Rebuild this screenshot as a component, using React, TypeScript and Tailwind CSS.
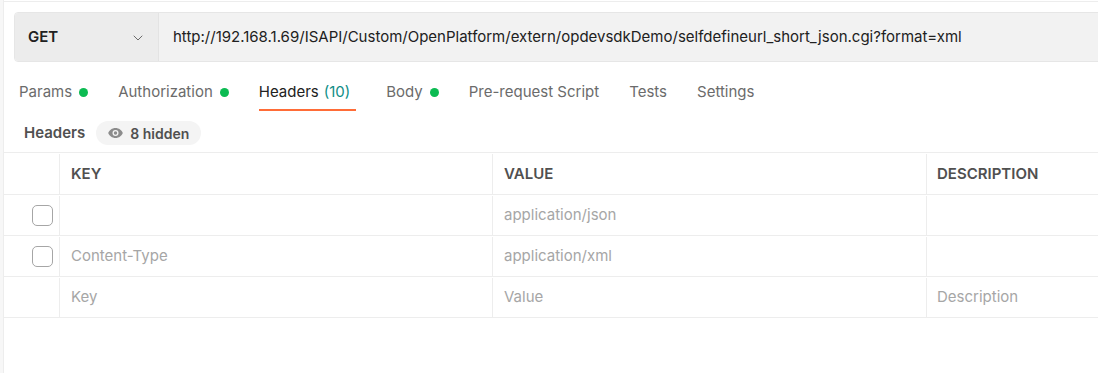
import React from 'react';
import { ChevronDown } from 'lucide-react';

const Dot = () => <span className="ml-[7px] inline-block h-[9px] w-[9px] rounded-full bg-[#0cbb52]" />;

interface TabProps {
    label: string;
    dot?: boolean;
    count?: string;
    active?: boolean;
}

const Tab: React.FC<TabProps> = ({ label, dot, count, active }) => {
    return (
        <div
            className={
                'flex items-center pt-[10px] pb-[7px] border-b-2 ' +
                (active ? 'border-[#ff6c37] text-[#212121] pr-[6px]' : 'border-transparent text-[#6b6b6b]')
            }
        >
            <span className="leading-[20px]">{label}</span>
            {count && <span className="ml-[5px] leading-[20px] text-[#0f8d86]">{count}</span>}
            {dot && <Dot />}
        </div>
    );
};

const EyeIcon = () => (
    <svg width="15" height="10" viewBox="0 0 15 10">
        <path d="M7.5 0C4 0 1.3 2.3 0.2 5c1.1 2.7 3.8 5 7.3 5s6.2-2.3 7.3-5C13.7 2.3 11 0 7.5 0z" fill="#8c8c8c" />
        <circle cx="7.5" cy="5" r="3" fill="#f4f4f4" />
        <circle cx="7.5" cy="5" r="1.7" fill="#8c8c8c" />
    </svg>
);

const Checkbox = () => (
    <div className="h-[21px] w-[21px] rounded-[5px] border border-[#a6a6a6] bg-white" />
);

interface RowProps {
    check?: boolean;
    keyText?: string;
    value?: string;
    desc?: string;
}

const Row: React.FC<RowProps> = ({ check, keyText, value, desc }) => {
    return (
        <div className="flex h-[41px] border-b border-[#ededed] pt-[1px] text-[15px] text-[#a6a6a6]">
            <div className="flex w-[56px] shrink-0 items-center justify-end pr-[6px] border-r border-[#ededed]">
                {check && <Checkbox />}
            </div>
            <div className="flex w-[433px] shrink-0 items-center pl-[11px] border-r border-[#ededed]">{keyText}</div>
            <div className="flex w-[434px] shrink-0 items-center pl-[11px] border-r border-[#ededed]">{value}</div>
            <div className="flex flex-1 items-center pl-[10px]">{desc}</div>
        </div>
    );
};

export default function App() {
    return (
        <div className="flex h-[373px] w-[1098px] overflow-hidden bg-white font-['Inter',sans-serif]">
            <div className="w-[3px] shrink-0 bg-[#f7f7f7]" />
            <div className="flex min-w-0 flex-1 flex-col border-l border-[#ededed]">
                <div className="mt-[1px] border-t border-[#ededed]" />

                <div className="ml-[10px] mt-[10px] flex h-[50px] w-[1110px] shrink-0 overflow-hidden rounded-l-[4px] border border-[#e6e6e6]">
                    <div className="flex w-[144px] shrink-0 items-center justify-between bg-[#ececec] pl-[13px] pr-[12px] pt-[1px] border-r border-[#e3e3e3]">
                        <span className="text-[15px] font-semibold text-[#212121]">GET</span>
                        <ChevronDown size={16} strokeWidth={1.5} color="#6b6b6b" />
                    </div>
                    <div className="flex flex-1 items-center bg-[#f2f2f2] pl-[14px] text-[15px] text-[#212121]">
                        http://192.168.1.69/ISAPI/Custom/OpenPlatform/extern/opdevsdkDemo/selfdefineurl_short_json.cgi?format=xml
                    </div>
                </div>

                <div className="mt-[10px] flex gap-[30px] pl-[15px] text-[15px]">
                    <Tab label="Params" dot />
                    <Tab label="Authorization" dot />
                    <Tab label="Headers" count="(10)" active />
                    <Tab label="Body" dot />
                    <Tab label="Pre-request Script" />
                    <Tab label="Tests" />
                    <Tab label="Settings" />
                </div>

                <div className="mt-[10px] flex h-[24px] items-center gap-[11px] pl-[20px]">
                    <span className="text-[15px] font-semibold text-[#505050]">Headers</span>
                    <div className="flex h-[24px] items-center gap-[7px] rounded-full bg-[#f4f4f4] pl-[12px] pr-[12px]">
                        <EyeIcon />
                        <span className="text-[14px] font-semibold text-[#505050]">8 hidden</span>
                    </div>
                </div>

                <div className="mt-[7px] border-t border-[#ededed]">
                    <div className="flex h-[42px] border-b border-[#ededed] pt-[1px] text-[15px] font-semibold text-[#505050]">
                        <div className="w-[56px] shrink-0 border-r border-[#ededed]" />
                        <div className="flex w-[433px] shrink-0 items-center pl-[11px] border-r border-[#ededed]">KEY</div>
                        <div className="flex w-[434px] shrink-0 items-center pl-[11px] border-r border-[#ededed]">VALUE</div>
                        <div className="flex flex-1 items-center pl-[10px]">DESCRIPTION</div>
                    </div>
                    <Row check value="application/json" />
                    <Row check keyText="Content-Type" value="application/xml" />
                    <Row keyText="Key" value="Value" desc="Description" />
                </div>
            </div>
        </div>
    );
}
